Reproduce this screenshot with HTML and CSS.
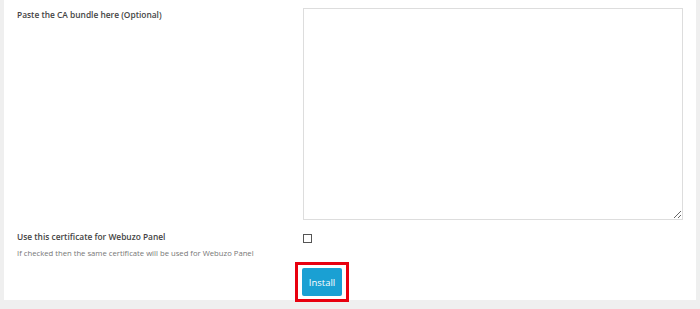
FILE: index.html
```html
<!DOCTYPE html>
<html>
<head>
<meta charset="utf-8">
<link rel="stylesheet" href="styles.css">
</head>
<body>
<div class="panel">
  <div class="row row-bundle">
    <label class="label" for="ca">Paste the CA bundle here (Optional)</label>
    <textarea id="ca" class="field-area"></textarea>
  </div>
  <div class="row row-check">
    <div class="label-block">
      <label class="label" for="wp">Use this certificate for Webuzo Panel</label>
      <div class="hint">If checked then the same certificate will be used for Webuzo Panel</div>
    </div>
    <div class="check-wrap"><input type="checkbox" id="wp" class="check"></div>
  </div>
  <div class="actions">
    <div class="highlight"><button class="btn">Install</button></div>
  </div>
</div>
</body>
</html>
```

FILE: styles.css
```css
html, body {
  margin: 0;
  padding: 0;
}
body {
  background: #efefef;
  font-family: "Open Sans", "Liberation Sans", sans-serif;
  color: #444;
  width: 700px;
  height: 309px;
  overflow: hidden;
}
.panel {
  margin: 0 4px;
  background: #fff;
  height: 300px;
  padding: 8px 13px 0;
  box-sizing: border-box;
}
.row {
  display: grid;
  grid-template-columns: 286px 380px;
}
.label {
  font-size: 8.4px;
  font-weight: 600;
  color: #444;
  line-height: 12px;
  display: block;
}
.row-bundle .label {
  padding-top: 1px;
}
.field-area {
  width: 380px;
  height: 212px;
  box-sizing: border-box;
  border: 1px solid #ddd;
  margin: 0;
  padding: 0;
  resize: both;
  background: #fff;
}
.row-check {
  margin-top: 11px;
}
.hint {
  font-size: 7.7px;
  color: #777;
  line-height: 10px;
  margin-top: 5px;
}
.check-wrap {
  padding-top: 3px;
}
.check {
  appearance: none;
  -webkit-appearance: none;
  width: 9px;
  height: 9px;
  border: 1px solid #555;
  margin: 0;
  box-sizing: border-box;
  background: #fff;
  display: block;
}
.actions {
  display: flex;
  padding-left: 278px;
  margin-top: 4px;
}
.highlight {
  border: 3px solid #e8000f;
  padding: 3px 4px;
  background: #fff;
}
.btn {
  display: block;
  width: 40px;
  height: 28px;
  background: #1aa0d3;
  color: #fff;
  border: 0;
  border-radius: 2px;
  font-family: "Open Sans", "Liberation Sans", sans-serif;
  font-size: 9.5px;
  padding: 0;
}
```
